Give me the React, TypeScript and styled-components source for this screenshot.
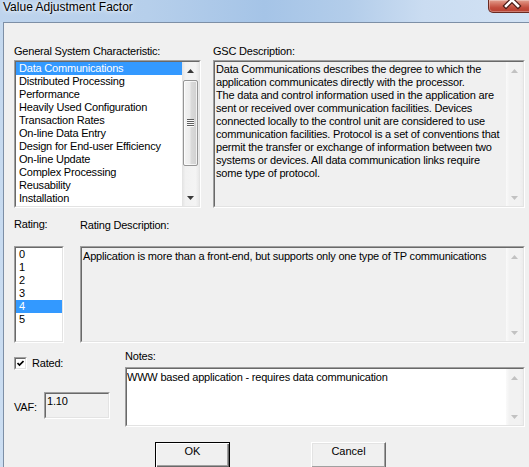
import React from 'react';
import styled, { createGlobalStyle } from 'styled-components';

const GlobalStyle = createGlobalStyle`
  html, body {
    margin: 0;
    padding: 0;
    background: #f0f0f0;
  }
  body {
    font-family: "Liberation Sans", Arial, sans-serif;
    font-size: 11px;
    color: #000;
  }
`;

// only the rows that fit in the list box (the 12th one peeks out at the bottom)
const characteristics = [
  'Data Communications',
  'Distributed Processing',
  'Performance',
  'Heavily Used Configuration',
  'Transaction Rates',
  'On-line Data Entry',
  'Design for End-user Efficiency',
  'On-line Update',
  'Complex Processing',
  'Reusability',
  'Installation',
  'Operational Ease',
];

const gscDescription = [
  'Data Communications describes the degree to which the',
  'application communicates directly with the processor.',
  'The data and control information used in the application are',
  'sent or received over communication facilities. Devices',
  'connected locally to the control unit are considered to use',
  'communication facilities. Protocol is a set of conventions that',
  'permit the transfer or exchange of information between two',
  'systems or devices. All data communication links require',
  'some type of protocol.',
];

const ratings = ['0', '1', '2', '3', '4', '5'];

const Arrow: React.FC<{ up?: boolean; color: string }> = ({ up, color }) => (
  <svg width="7" height="4" viewBox="0 0 7 4" style={{ display: 'block' }}>
    <polygon points={up ? '0,4 3.5,0 7,4' : '0,0 3.5,4 7,0'} fill={color} />
  </svg>
);

const ScrollBar: React.FC<{ active?: boolean }> = ({ active }) => {
  const color = active ? '#3a3a3a' : '#c2c2c2';
  return (
    <Scroll $active={active}>
      <ArrowBox>
        <Arrow up color={color} />
      </ArrowBox>
      <Track>{active && <Thumb><Grip /></Thumb>}</Track>
      <ArrowBox>
        <Arrow color={color} />
      </ArrowBox>
    </Scroll>
  );
};

const App: React.FC = () => {
  return (
    <>
      <GlobalStyle />
      <Window>
        <TitleBar>
          <Title>Value Adjustment Factor</Title>
          <CloseButton>
            <svg width="47" height="12" viewBox="0 0 47 12" style={{ display: 'block' }}>
              <g strokeLinecap="square">
                <path d="M17 -6 L29 6 M29 -6 L17 6" stroke="#4a1c16" strokeWidth="5" />
                <path d="M17 -6 L29 6 M29 -6 L17 6" stroke="#ffffff" strokeWidth="2.6" />
              </g>
            </svg>
          </CloseButton>
        </TitleBar>

        <Client>
          <TopGrid>
            <Label>General System Characteristic:</Label>
            <Label>GSC Description:</Label>
            <Well>
              <WellInner $bg="#ffffff">
                <ListArea>
                  {characteristics.map((c, i) => (
                    <ListItem key={c} $selected={i === 0}>{c}</ListItem>
                  ))}
                </ListArea>
                <ScrollBar active />
              </WellInner>
            </Well>
            <Well>
              <WellInner $bg="#f0f0f0">
                <TextArea $pt={1}>
                  {gscDescription.map((line) => (
                    <TextLine key={line}>{line}</TextLine>
                  ))}
                </TextArea>
                <ScrollBar />
              </WellInner>
            </Well>
          </TopGrid>

          <MidGrid>
            <Label>Rating:</Label>
            <Label $offset={1}>Rating Description:</Label>
            <Well>
              <WellInner $bg="#ffffff">
                <ListArea>
                  {ratings.map((r) => (
                    <ListItem key={r} $selected={r === '4'}>{r}</ListItem>
                  ))}
                </ListArea>
              </WellInner>
            </Well>
            <Well>
              <WellInner $bg="#f0f0f0">
                <TextArea $pt={2}>
                  <TextLine>Application is more than a front-end, but supports only one type of TP communications</TextLine>
                </TextArea>
                <ScrollBar />
              </WellInner>
            </Well>
          </MidGrid>

          <BottomRow>
            <LeftCol>
              <CheckRow>
                <CheckBox>
                  <CheckInner>
                    <svg width="7" height="7" viewBox="0 0 7 7" style={{ display: 'block' }}>
                      <polyline points="0.5,3 2.5,5 6.5,1" fill="none" stroke="#000" strokeWidth="1.7" />
                    </svg>
                  </CheckInner>
                </CheckBox>
                <span>Rated:</span>
              </CheckRow>
              <VafRow>
                <VafLabel>VAF:</VafLabel>
                <VafBox>
                  <WellInner $bg="#f0f0f0">
                    <TextArea $pt={1}>1.10</TextArea>
                  </WellInner>
                </VafBox>
              </VafRow>
            </LeftCol>
            <NotesCol>
              <Label>Notes:</Label>
              <Well>
                <WellInner $bg="#ffffff">
                  <TextArea $pt={2} $pl={0}>
                    <TextLine>WWW based application - requires data communication</TextLine>
                  </TextArea>
                  <ScrollBar />
                </WellInner>
              </Well>
            </NotesCol>
          </BottomRow>

          <ButtonRow>
            <PushButton $default>OK</PushButton>
            <PushButton>Cancel</PushButton>
          </ButtonRow>
        </Client>
      </Window>
    </>
  );
};

const Window = styled.div`
  width: 529px;
  height: 467px;
  overflow: hidden;
  display: flex;
  flex-direction: column;
  background: linear-gradient(180deg, #c4d8ee 0%, #ccdef2 100%);
`;

const TitleBar = styled.div`
  height: 22px;
  flex: none;
  display: flex;
  align-items: flex-start;
  background: linear-gradient(90deg, #bed4ed 0%, #b6cfeb 28%, #a5c4e7 50%, #b3cdea 66%, #cadcf1 80%, #d2e2f4 100%);
`;

const Title = styled.span`
  padding-left: 3px;
  font: 12px/15px "Liberation Sans", Arial, sans-serif;
  color: #000;
  text-shadow: 0 0 6px #ffffff, 0 0 3px rgba(255, 255, 255, 0.8);
`;

const CloseButton = styled.div`
  margin-left: auto;
  margin-right: -8px;
  width: 47px;
  height: 12px;
  border: 1px solid #6a2a22;
  border-top: none;
  border-radius: 0 0 5px 5px;
  overflow: hidden;
  background: linear-gradient(180deg, #e3a08f 0%, #d2705f 35%, #c24c3c 65%, #b84232 100%);
  box-shadow: inset 0 0 0 1px rgba(255, 255, 255, 0.3);
`;

const Client = styled.div`
  flex: 1;
  margin-left: 3px;
  border-top: 1px solid #7d8fa6;
  border-left: 1px solid #7d8fa6;
  background: #f0f0f0;
  padding: 22px 4px 0 10px;
  display: flex;
  flex-direction: column;
`;

const Label = styled.div<{ $offset?: number }>`
  height: 13px;
  line-height: 13px;
  white-space: nowrap;
  letter-spacing: -0.2px;
  margin-top: ${(p) => p.$offset ?? 0}px;
`;

const TopGrid = styled.div`
  display: grid;
  grid-template-columns: 187px 1fr;
  grid-template-rows: 13px 148px;
  column-gap: 12px;
  row-gap: 2px;
`;

const MidGrid = styled.div`
  margin-top: 10px;
  display: grid;
  grid-template-columns: 50px 1fr;
  grid-template-rows: 13px 97px;
  column-gap: 16px;
  row-gap: 15px;
`;

const Well = styled.div`
  display: flex;
  min-width: 0;
  box-sizing: border-box;
  border: 1px solid;
  border-color: #a0a0a0 #ffffff #ffffff #a0a0a0;
`;

const WellInner = styled.div<{ $bg: string }>`
  flex: 1;
  min-width: 0;
  display: flex;
  border: 1px solid;
  border-color: #696969 #e3e3e3 #e3e3e3 #696969;
  background: ${(p) => p.$bg};
`;

const ListArea = styled.div`
  flex: 1;
  min-width: 0;
  overflow: hidden;
`;

const ListItem = styled.div<{ $selected?: boolean }>`
  height: 13px;
  line-height: 13px;
  padding-left: 3px;
  white-space: nowrap;
  letter-spacing: -0.2px;
  background: ${(p) => (p.$selected ? '#3399ff' : 'transparent')};
  color: ${(p) => (p.$selected ? '#ffffff' : '#000000')};
`;

const TextArea = styled.div<{ $pt?: number; $pl?: number }>`
  flex: 1;
  min-width: 0;
  overflow: hidden;
  padding: ${(p) => p.$pt ?? 1}px 0 0 ${(p) => p.$pl ?? 1}px;
  line-height: 13px;
  letter-spacing: -0.2px;
  white-space: nowrap;
`;

const TextLine = styled.div`
  height: 13px;
`;

const Scroll = styled.div<{ $active?: boolean }>`
  width: 17px;
  flex: none;
  display: flex;
  flex-direction: column;
  background: ${(p) =>
    p.$active
      ? 'linear-gradient(90deg, #e2e2e2 0%, #f1f1f1 20%, #f4f4f4 80%, #e8e8e8 100%)'
      : 'linear-gradient(90deg, #fafafa 0%, #f2f2f2 20%, #f2f2f2 80%, #ececec 100%)'};
`;

const ArrowBox = styled.div`
  height: 17px;
  flex: none;
  display: flex;
  align-items: center;
  justify-content: center;
`;

const Track = styled.div`
  flex: 1;
  padding: 0 1px 0 1px;
`;

const Thumb = styled.div`
  margin-top: 1px;
  height: 84px;
  border: 1px solid #969696;
  border-radius: 2px;
  background: linear-gradient(90deg, #f4f4f4 0%, #ececec 45%, #dadada 55%, #d0d0d0 100%);
  box-shadow: inset 0 0 0 1px rgba(255, 255, 255, 0.7);
  display: flex;
  align-items: center;
  justify-content: center;
`;

const Grip = styled.span`
  width: 7px;
  height: 8px;
  background: repeating-linear-gradient(180deg, #5e5e5e 0px, #5e5e5e 1px, #fbfbfb 1px, #fbfbfb 2px);
`;

const BottomRow = styled.div`
  margin-top: 7px;
  display: flex;
`;

const LeftCol = styled.div`
  width: 111px;
  flex: none;
  padding-top: 7px;
  display: flex;
  flex-direction: column;
`;

const CheckRow = styled.div`
  height: 13px;
  line-height: 13px;
  display: flex;
  align-items: center;
  gap: 5px;
  letter-spacing: -0.2px;
`;

const CheckBox = styled.span`
  width: 13px;
  height: 13px;
  box-sizing: border-box;
  display: flex;
  border: 1px solid;
  border-color: #a0a0a0 #ffffff #ffffff #a0a0a0;
`;

const CheckInner = styled.span`
  flex: 1;
  display: flex;
  align-items: center;
  justify-content: center;
  background: #ffffff;
  border: 1px solid;
  border-color: #696969 #e3e3e3 #e3e3e3 #696969;
`;

const VafRow = styled.div`
  margin-top: 22px;
  display: flex;
  align-items: flex-start;
`;

const VafLabel = styled.span`
  width: 30px;
  margin-top: 9px;
  line-height: 13px;
  letter-spacing: -0.2px;
`;

const VafBox = styled(Well)`
  width: 66px;
  height: 27px;
`;

const NotesCol = styled.div`
  flex: 1;
  min-width: 0;
  display: grid;
  grid-template-rows: 13px 60px;
  row-gap: 4px;
`;

const ButtonRow = styled.div`
  margin-top: 15px;
  padding-left: 141px;
  display: flex;
  gap: 81px;
`;

const PushButton = styled.button<{ $default?: boolean }>`
  width: 75px;
  height: 26px;
  margin: 0;
  padding: 2px 0 0;
  box-sizing: border-box;
  font: 11px/13px "Liberation Sans", Arial, sans-serif;
  color: #000;
  background: #f0f0f0;
  display: flex;
  justify-content: center;
  align-items: flex-start;
  border: 1px solid;
  border-color: ${(p) => (p.$default ? '#000000' : '#ffffff #696969 #696969 #ffffff')};
  box-shadow: ${(p) =>
    p.$default
      ? 'inset 1px 1px 0 #ffffff, inset -1px -1px 0 #696969, inset -2px -2px 0 #a0a0a0'
      : 'inset -1px -1px 0 #a0a0a0, inset 1px 1px 0 #e3e3e3'};
`;

export default App;
